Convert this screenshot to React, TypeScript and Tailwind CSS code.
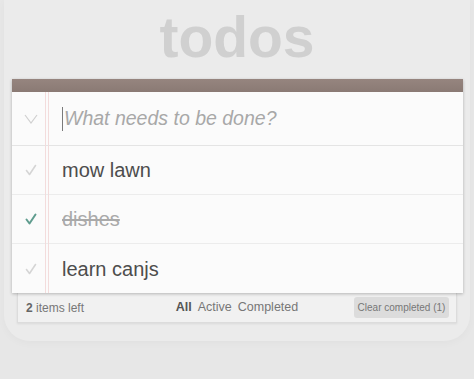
const todos = [
  { title: 'mow lawn', done: false },
  { title: 'dishes', done: true },
  { title: 'learn canjs', done: false },
]

function Check({ done }: { done: boolean }) {
  return (
    <svg width="14" height="14" viewBox="0 0 14 14" className="flex-none">
      <path
        d="M2.5 7.5 L5.5 11.5 L11.5 2.5"
        fill="none"
        stroke={done ? '#5f9c8e' : '#d5d5d5'}
        strokeWidth={done ? 2 : 1.6}
        strokeLinecap="round"
        strokeLinejoin="round"
      />
    </svg>
  )
}

export default function App() {
  return (
    <div
      className="relative h-[379px] w-[474px] overflow-hidden bg-[#e7e7e7]"
      style={{ fontFamily: '"Liberation Sans", Arial, sans-serif' }}
    >
      <div className="mx-[4px] flex h-[341px] flex-col rounded-b-[26px] bg-[#ebebeb] px-[8px] shadow-[0_2px_8px_rgba(0,0,0,0.03)]">
        <h1 className="flex h-[79px] items-center justify-center pb-[4px] text-[57px] font-bold leading-none text-[#d0d0d0]">
          todos
        </h1>

        <div className="relative w-[451px] bg-[#fbfbfb] shadow-[0_1px_3px_rgba(0,0,0,0.25)]">
          <div className="h-[13px] bg-gradient-to-b from-[#96857f] to-[#8a7a74]" />
          <div className="absolute bottom-0 left-[33px] top-[13px] w-px bg-[#f3dcdc]" />
          <div className="absolute bottom-0 left-[36px] top-[13px] w-px bg-[#f3dcdc]" />

          <div className="flex h-[54px] items-center border-b border-[#e4e4e4]">
            <div className="flex w-[37px] justify-center pl-[1px]">
              <svg width="14" height="10" viewBox="0 0 14 10">
                <path d="M1 1 L7 9 L13 1" fill="none" stroke="#d0d0d0" strokeWidth="1.2" />
              </svg>
            </div>
            <div className="ml-[13px] flex items-center">
              <div className="mr-[1px] h-[24px] w-px bg-[#7a7a7a]" />
              <span className="text-[19.5px] italic text-[#a8a8a8]">What needs to be done?</span>
            </div>
          </div>

          {todos.map((t, i) => (
            <div
              key={t.title}
              className={`flex h-[49px] items-center ${i < todos.length - 1 ? 'border-b border-[#ececec]' : ''}`}
            >
              <div className="flex w-[37px] justify-center">
                <Check done={t.done} />
              </div>
              <span
                className={`ml-[13px] text-[20px] ${t.done ? 'text-[#a9a9a9] line-through' : 'text-[#4d4d4d]'}`}
              >
                {t.title}
              </span>
            </div>
          ))}
        </div>

        <div className="mx-[5px] flex h-[30px] items-center whitespace-nowrap border-x border-b border-[#dcdcdc] bg-[#f1f1f1] pl-[8px] pr-[7px] text-[12px] text-[#777] shadow-[0_1px_2px_rgba(0,0,0,0.08)]">
          <span className="w-[120px] flex-none">
            <b className="text-[#666]">2</b> items left
          </span>
          <div className="flex flex-1 justify-center gap-[6px] pr-[26px] text-[12.5px]">
            <span className="font-bold text-[#555]">All</span>
            <span>Active</span>
            <span>Completed</span>
          </div>
          <span className="w-[95px] flex-none rounded-[3px] bg-[#dcdcdc] py-[3px] text-center text-[10px] text-[#777]">
            Clear completed (1)
          </span>
        </div>
      </div>
    </div>
  )
}
